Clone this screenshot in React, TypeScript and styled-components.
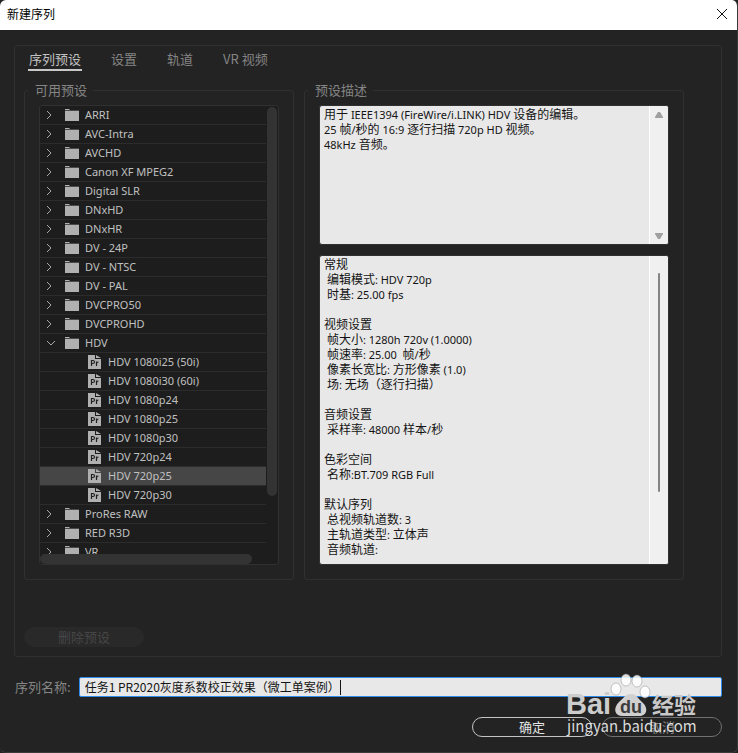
import React, { useState } from "react";
import styled, { createGlobalStyle } from "styled-components";

const GlobalStyle = createGlobalStyle`
  *, *::before, *::after { box-sizing: border-box; }
  body { margin: 0; background: #232323; }
  button, input { font: inherit; color: inherit; margin: 0; }
`;

const Dialog = styled.div`
  position: relative;
  min-height: 100vh;
  display: flex;
  flex-direction: column;
  background: #232323;
  border-right: 1px solid #3a3a3a;
  border-bottom: 1px solid #3a3a3a;
  border-radius: 6px;
  overflow: hidden;
  color: #a0a0a0;
  font-family: "Noto Sans CJK SC", sans-serif;
  font-size: 12px;
  line-height: 18px;
`;

const TitleBar = styled.header`
  display: flex;
  align-items: center;
  justify-content: space-between;
  height: 30px;
  padding: 0 8px 2px 7px;
  background: #fff;
  color: #000;
`;

const Title = styled.h1`
  margin: 0;
  font-size: 12px;
  font-weight: 400;
`;

const CloseButton = styled.button`
  display: flex;
  padding: 1px;
  border: 0;
  background: none;
`;

const Body = styled.main`
  flex: 1;
  padding: 15px 15px 15px 14px;
`;

const Panel = styled.section`
  padding: 5px 37px 9px 9px;
  border: 1px solid #303030;
  border-radius: 3px;
`;

const TabBar = styled.nav`
  display: flex;
  gap: 28px;
  padding-left: 4px;
`;

const Tab = styled.button<{ $active?: boolean }>`
  padding: 0 1px 2px;
  border: 0;
  border-bottom: 2px solid ${(p) => (p.$active ? "#c8c8c8" : "transparent")};
  background: none;
  color: ${(p) => (p.$active ? "#c0c0c0" : "#858585")};
  font-size: 13px;
  line-height: 16px;
`;

const Columns = styled.div`
  display: grid;
  grid-template-columns: 27fr 38fr;
  gap: 10px;
  margin-top: 10px;
`;

const Group = styled.fieldset`
  min-width: 0;
  margin: 0;
  padding: 6px 14px 14px;
  border: 1px solid #303030;
  border-radius: 3px;
`;

const Legend = styled.legend`
  margin-left: -11px;
  padding: 0 6px 0 7px;
  color: #858585;
  font-size: 13px;
  line-height: 18px;
`;

const ListBox = styled.div`
  display: grid;
  grid-template: 1fr 10px / 1fr 10px;
  height: 460px;
  column-gap: 1px;
  padding-right: 1px;
  border: 1px solid #303030;
  border-radius: 3px;
  background: #1d1d1d;
`;

const Tree = styled.div`
  min-height: 0;
  overflow: hidden;
`;

const TreeRow = styled.div<{ $level: number; $selected?: boolean }>`
  display: flex;
  align-items: center;
  height: 19px;
  padding-left: ${(p) => (p.$level ? 48 : 5)}px;
  border-bottom: 1px solid #2c2c2c;
  background: ${(p) => (p.$selected ? "#464646" : "transparent")};
  color: #c0c0c0;
  font-family: "Noto Sans", "Noto Sans CJK SC", sans-serif;
  font-size: 11px;
  white-space: nowrap;
`;

const Disclosure = styled.button`
  display: flex;
  width: 20px;
  padding: 0;
  border: 0;
  background: none;
`;

const RowLabel = styled.span`
  margin-left: 6px;
`;

const VerticalThumb = styled.div`
  height: 389px;
  margin-top: 1px;
  border-radius: 5px;
  background: #333;
`;

const HorizontalThumb = styled.div`
  width: 94%;
  border-radius: 5px;
  background: #333;
`;

const DescriptionStack = styled.div`
  display: flex;
  flex-direction: column;
  gap: 10px;
`;

const TextPane = styled.div<{ $height: number }>`
  display: flex;
  height: ${(p) => p.$height}px;
  border: 1px solid #303030;
  border-radius: 3px;
  overflow: hidden;
  background: #e8e8e8;
`;

const PaneText = styled.div`
  flex: 1;
  min-width: 0;
  padding: 0 4px;
  overflow: hidden;
  color: #141414;
  line-height: 15px;
`;

const PaneLine = styled.p`
  min-height: 15px;
  margin: 0;
  white-space: pre-wrap;
`;

const Latin = styled.span`
  font-family: "Noto Sans", sans-serif;
  font-size: 11px;
  line-height: 1;
`;

const PaneTrack = styled.div`
  display: flex;
  flex-direction: column;
  align-items: center;
  justify-content: space-between;
  width: 19px;
  padding: 6px 1px 5px 0;
  border-left: 1px solid #fff;
  background: #f0f0f0;
`;

const ThinThumb = styled.div`
  width: 2px;
  height: 219px;
  margin-top: 11px;
  border-radius: 1px;
  background: #858585;
`;

const PillButton = styled.button<{ $tone: "primary" | "normal" }>`
  width: 120px;
  height: 20px;
  padding: 0 0 1px;
  border: 1px solid ${(p) => (p.$tone === "primary" ? "#c4c4c4" : "#707070")};
  border-radius: 10px;
  background: transparent;
  color: ${(p) => (p.$tone === "primary" ? "#e4e4e4" : "#858585")};
  font-size: 13px;
  line-height: 16px;

  &:disabled {
    border-color: #292929;
    background: #292929;
    color: #464646;
  }
`;

const DeleteRow = styled.div`
  margin-top: 47px;
`;

const NameRow = styled.div`
  display: flex;
  align-items: center;
  gap: 8px;
  margin-top: 20px;
  padding-left: 1px;
`;

const NameLabel = styled.label`
  color: #858585;
  font-size: 13px;
`;

const NameField = styled.div`
  display: flex;
  flex: 1;
  align-items: center;
  height: 20px;
  padding-left: 5px;
  border: 1px solid #2d8ceb;
  border-radius: 2px;
  background: #e8e8e8;
`;

const NameInput = styled.input`
  field-sizing: content;
  max-width: 100%;
  height: 16px;
  padding: 0;
  border: 0;
  outline: 0;
  background: transparent;
  color: #141414;
`;

const Caret = styled.span`
  width: 1px;
  height: 15px;
  background: #141414;
`;

const Actions = styled.footer`
  display: flex;
  justify-content: flex-end;
  gap: 10px;
  margin-top: 20px;
`;

const Watermark = styled.div`
  position: absolute;
  right: 32px;
  bottom: 12px;
  display: flex;
  pointer-events: none;
`;

const folders = [
  "ARRI", "AVC-Intra", "AVCHD", "Canon XF MPEG2", "Digital SLR", "DNxHD", "DNxHR",
  "DV - 24P", "DV - NTSC", "DV - PAL", "DVCPRO50", "DVCPROHD", "HDV",
  "ProRes RAW", "RED R3D", "VR",
];

const hdvPresets = [
  "HDV 1080i25 (50i)", "HDV 1080i30 (60i)", "HDV 1080p24", "HDV 1080p25",
  "HDV 1080p30", "HDV 720p24", "HDV 720p25", "HDV 720p30",
];

const summary = `用于 IEEE1394 (FireWire/i.LINK) HDV 设备的编辑。
25 帧/秒的 16:9 逐行扫描 720p HD 视频。
48kHz 音频。`;

const details = `常规
 编辑模式: HDV 720p
 时基: 25.00 fps

视频设置
 帧大小: 1280h 720v (1.0000)
 帧速率: 25.00  帧/秒
 像素长宽比: 方形像素 (1.0)
 场: 无场（逐行扫描）

音频设置
 采样率: 48000 样本/秒

色彩空间
 名称:BT.709 RGB Full

默认序列
 总视频轨道数: 3
 主轨道类型: 立体声
 音频轨道:`;

const MixedText = ({ text }: { text: string }) => (
  <>
    {text.split("\n").map((line, row) => (
      <PaneLine key={row}>
        {line.split(/([\x20-\x7e]+)/).map((run, i) => (i % 2 ? <Latin key={i}>{run}</Latin> : run))}
      </PaneLine>
    ))}
  </>
);

const Chevron = ({ open }: { open: boolean }) => (
  <svg width="11" height="10" viewBox="0 0 11 10" fill="none" stroke="#a8a8a8" aria-hidden="true">
    <path d={open ? "M2 3l4 4 4-4" : "M2 1l4 4-4 4"} />
  </svg>
);

const FolderIcon = () => (
  <svg width="14" height="12" viewBox="0 0 14 12" aria-hidden="true">
    <path d="M0 0h4l1 1H0z" fill="#b0b0b0" />
    <path d="M0 2h14v10H0z" fill="#b0b0b0" />
    <path d="M0 1h14v1H0z" fill="#4a4a4a" />
  </svg>
);

const PresetIcon = () => (
  <svg width="14" height="14" viewBox="0 0 14 14" aria-hidden="true">
    <path d="M0 0h7v4h6v10H0zM8 0l5 3H8z" fill="#b0b0b0" />
    <path d="M3.5 11V5.5h1.4q1.6 0 1.6 1.5T4.9 8.5H3.5M8.5 11V6.5M8.5 8.5q.5-1.5 2-1.5" fill="none" stroke="#202020" strokeWidth="1.2" />
  </svg>
);

const Arrow = ({ down }: { down?: boolean }) => (
  <svg width="8" height="6" viewBox="0 0 8 6" fill="#a0a0a0" aria-hidden="true">
    <path d={down ? "M0 0h8v1L5 6H3L0 1z" : "M0 6h8V5L5 0H3L0 5z"} />
  </svg>
);

const WatermarkLogo = () => (
  <svg width="140" height="68" viewBox="0 0 140 68" aria-hidden="true">
    <g fill="#fff" fillOpacity="0.85" stroke="#777" strokeOpacity="0.4">
      <ellipse cx="51" cy="17" rx="5" ry="6" />
      <ellipse cx="61" cy="8" rx="5" ry="6" />
      <ellipse cx="72" cy="9" rx="5" ry="6" />
      <ellipse cx="80" cy="20" rx="5" ry="6" />
    </g>
    <path d="M66 22c6 0 7 5 11 8 7 6 5 14-3 14H58c-9 0-10-8-4-14 4-3 6-8 12-8z" fill="#d0d0d0" />
    <g fontFamily="Liberation Sans, sans-serif" fontWeight="700">
      <text x="1" y="42" fontSize="29" fill="#ccc">Bai</text>
      <text x="55" y="41" fontSize="18" fill="#3c3c3c">du</text>
    </g>
    <text x="87" y="41" fontSize="22" fontWeight="700" fill="#c8c8c8" fontFamily="Noto Sans CJK SC, sans-serif">经验</text>
    <text x="2" y="60" fontSize="15" fill="#dcdcdc" fontFamily="Noto Sans CJK SC, sans-serif">jingyan.baidu.com</text>
  </svg>
);

export default function App() {
  const [name, setName] = useState("任务1 PR2020灰度系数校正效果（微工单案例）");
  const [selected, setSelected] = useState("HDV 720p25");
  const [open, setOpen] = useState("HDV");

  return (
    <>
      <GlobalStyle />
      <Dialog>
        <TitleBar>
          <Title>新建序列</Title>
          <CloseButton aria-label="关闭">
            <svg width="12" height="12" viewBox="0 0 12 12" stroke="#111" aria-hidden="true">
              <path d="M1 1l10 10M11 1L1 11" />
            </svg>
          </CloseButton>
        </TitleBar>
        <Body>
          <Panel>
            <TabBar>
              <Tab $active>序列预设</Tab>
              <Tab>设置</Tab>
              <Tab>轨道</Tab>
              <Tab>VR 视频</Tab>
            </TabBar>
            <Columns>
              <Group>
                <Legend>可用预设</Legend>
                <ListBox>
                  <Tree role="tree">
                    {folders.map((folder) => (
                      <React.Fragment key={folder}>
                        <TreeRow $level={0} role="treeitem" aria-expanded={open === folder}>
                          <Disclosure aria-label={folder} onClick={() => setOpen(open === folder ? "" : folder)}>
                            <Chevron open={open === folder} />
                          </Disclosure>
                          <FolderIcon />
                          <RowLabel>{folder}</RowLabel>
                        </TreeRow>
                        {folder === "HDV" && open === "HDV" && hdvPresets.map((preset) => (
                          <TreeRow
                            key={preset}
                            $level={1}
                            $selected={selected === preset}
                            role="treeitem"
                            aria-selected={selected === preset}
                            onClick={() => setSelected(preset)}
                          >
                            <PresetIcon />
                            <RowLabel>{preset}</RowLabel>
                          </TreeRow>
                        ))}
                      </React.Fragment>
                    ))}
                  </Tree>
                  <VerticalThumb />
                  <HorizontalThumb />
                </ListBox>
              </Group>
              <Group>
                <Legend>预设描述</Legend>
                <DescriptionStack>
                  <TextPane $height={140}>
                    <PaneText>
                      <MixedText text={summary} />
                    </PaneText>
                    <PaneTrack>
                      <Arrow />
                      <Arrow down />
                    </PaneTrack>
                  </TextPane>
                  <TextPane $height={310}>
                    <PaneText>
                      <MixedText text={details} />
                    </PaneText>
                    <PaneTrack>
                      <ThinThumb />
                    </PaneTrack>
                  </TextPane>
                </DescriptionStack>
              </Group>
            </Columns>
            <DeleteRow>
              <PillButton $tone="normal" disabled>删除预设</PillButton>
            </DeleteRow>
          </Panel>
          <NameRow>
            <NameLabel htmlFor="sequence-name">序列名称:</NameLabel>
            <NameField>
              <NameInput id="sequence-name" value={name} onChange={(e) => setName(e.target.value)} />
              <Caret />
            </NameField>
          </NameRow>
          <Actions>
            <PillButton $tone="primary">确定</PillButton>
            <PillButton $tone="normal">取消</PillButton>
          </Actions>
        </Body>
        <Watermark>
          <WatermarkLogo />
        </Watermark>
      </Dialog>
    </>
  );
}
